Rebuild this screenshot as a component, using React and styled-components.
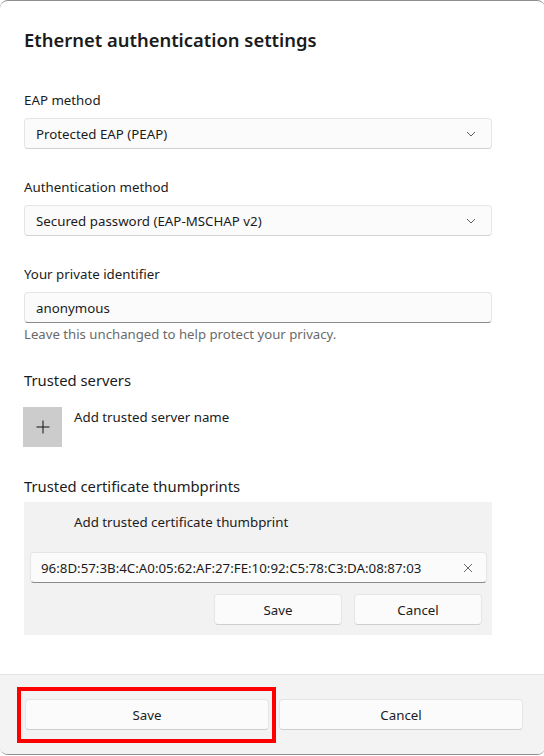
import React from "react";
import styled, { createGlobalStyle } from "styled-components";

const GlobalStyle = createGlobalStyle`
  html, body {
    margin: 0;
    padding: 0;
    background: #ffffff;
  }
  body {
    font-family: "Segoe UI", "Noto Sans", "Open Sans", sans-serif;
    color: #1b1b1b;
  }
  * { box-sizing: border-box; }
`;

const Chevron = () => (
  <svg width="10" height="6" viewBox="0 0 10 6">
    <path d="M1 1 L5 5 L9 1" fill="none" stroke="#5c5c5c" strokeWidth="1" />
  </svg>
);

const Cross = () => (
  <svg width="10" height="10" viewBox="0 0 10 10">
    <path d="M1 1 L9 9 M9 1 L1 9" fill="none" stroke="#6b6b6b" strokeWidth="1" />
  </svg>
);

const Plus = () => (
  <svg width="14" height="14" viewBox="0 0 14 14">
    <path d="M7 0.5 V13.5 M0.5 7 H13.5" fill="none" stroke="#111" strokeWidth="1" />
  </svg>
);

export default function App() {
  return (
    <>
      <GlobalStyle />
      <Dialog>
        <Body>
          <Title>Ethernet authentication settings</Title>

          <Field>
            <Label>EAP method</Label>
            <Select>
              <span>Protected EAP (PEAP)</span>
              <Chevron />
            </Select>
          </Field>

          <Field>
            <Label>Authentication method</Label>
            <Select>
              <span>Secured password (EAP-MSCHAP v2)</span>
              <Chevron />
            </Select>
          </Field>

          <Field>
            <Label>Your private identifier</Label>
            <TextBox>anonymous</TextBox>
            <Hint>Leave this unchanged to help protect your privacy.</Hint>
          </Field>

          <SectionTitle gap="16px">Trusted servers</SectionTitle>
          <AddRow>
            <PlusButton>
              <Plus />
            </PlusButton>
            <AddText>Add trusted server name</AddText>
          </AddRow>

          <SectionTitle gap="5px">Trusted certificate thumbprints</SectionTitle>
          <Panel>
            <PanelTitle>Add trusted certificate thumbprint</PanelTitle>
            <ThumbInput>
              <span>96:8D:57:3B:4C:A0:05:62:AF:27:FE:10:92:C5:78:C3:DA:08:87:03</span>
              <Cross />
            </ThumbInput>
            <PanelActions>
              <Button width="128px">Save</Button>
              <Button width="128px">Cancel</Button>
            </PanelActions>
          </Panel>
        </Body>

        <Footer>
          <Highlighted>
            <Button>Save</Button>
          </Highlighted>
          <Button>Cancel</Button>
        </Footer>
      </Dialog>
    </>
  );
}

const Dialog = styled.div`
  width: 545px;
  height: 755px;
  display: flex;
  flex-direction: column;
  background: #ffffff;
  border-top: 1px solid #8e8e8e;
  border-bottom: 1px solid #8e8e8e;
  border-radius: 8px;
  overflow: hidden;
`;

const Body = styled.div`
  flex: 1;
  padding: 25px 53px 0 24px;
  display: flex;
  flex-direction: column;
`;

const Title = styled.h1`
  margin: 0 0 36px;
  font-size: 18.4px;
  line-height: 28px;
  font-weight: 600;
`;

const Field = styled.div`
  display: flex;
  flex-direction: column;
  margin-bottom: 28px;
`;

const Label = styled.div`
  font-size: 13.3px;
  line-height: 20px;
  margin-bottom: 8px;
`;

const Select = styled.div`
  height: 31px;
  display: flex;
  align-items: center;
  justify-content: space-between;
  padding: 0 15px 0 11px;
  font-size: 13.3px;
  background: #fbfbfb;
  border: 1px solid #e5e5e5;
  border-bottom-color: #d2d2d2;
  border-radius: 4px;
`;

const TextBox = styled.div`
  height: 31px;
  display: flex;
  align-items: center;
  padding: 0 11px;
  font-size: 13.3px;
  background: #fbfbfb;
  border: 1px solid #e5e5e5;
  border-bottom: 1px solid #8a8a8a;
  border-radius: 4px;
`;

const Hint = styled.div`
  font-size: 13.2px;
  line-height: 20px;
  color: #6a6a6a;
  margin-top: 1px;
  margin-bottom: -3px;
`;

const SectionTitle = styled.div`
  font-size: 14.8px;
  line-height: 22px;
  margin-bottom: ${(p) => p.gap};
`;

const AddRow = styled.div`
  display: flex;
  align-items: flex-start;
  gap: 12px;
  margin-bottom: 28px;
`;

const PlusButton = styled.div`
  width: 39px;
  height: 40px;
  margin-left: -1px;
  background: #cccccc;
  display: flex;
  align-items: center;
  justify-content: center;
`;

const AddText = styled.div`
  font-size: 13.3px;
  line-height: 20px;
`;

const Panel = styled.div`
  background: #f2f2f2;
  height: 133px;
  padding: 10px 5px 0 6px;
  display: flex;
  flex-direction: column;
`;

const PanelTitle = styled.div`
  font-size: 13.3px;
  line-height: 20px;
  padding-left: 44px;
  margin-bottom: 20px;
`;

const ThumbInput = styled.div`
  height: 31px;
  display: flex;
  align-items: center;
  justify-content: space-between;
  padding: 0 13px 0 10px;
  font-size: 13.3px;
  background: #fbfbfb;
  border: 1px solid #e5e5e5;
  border-bottom-color: #8a8a8a;
  border-radius: 4px;
`;

const PanelActions = styled.div`
  display: flex;
  justify-content: flex-end;
  gap: 12px;
  padding-right: 5px;
  margin-top: 11px;
`;

const Button = styled.div`
  width: ${(p) => p.width || "100%"};
  height: 31px;
  display: flex;
  align-items: center;
  justify-content: center;
  font-size: 13.3px;
  background: #fbfbfb;
  border: 1px solid #e5e5e5;
  border-bottom-color: #cfcfcf;
  border-radius: 4px;
  color: #1b1b1b;
`;

const Footer = styled.div`
  height: 80px;
  background: #f3f3f3;
  border-top: 1px solid #e3e3e3;
  display: grid;
  grid-template-columns: 1fr 1fr;
  align-items: start;
  gap: 10px;
  padding: 24px 22px 0 25px;
`;

const Highlighted = styled.div`
  position: relative;
  &::after {
    content: "";
    position: absolute;
    left: -8px;
    top: -12px;
    right: -7px;
    bottom: -13px;
    border: 4px solid #ff0000;
    pointer-events: none;
  }
`;
